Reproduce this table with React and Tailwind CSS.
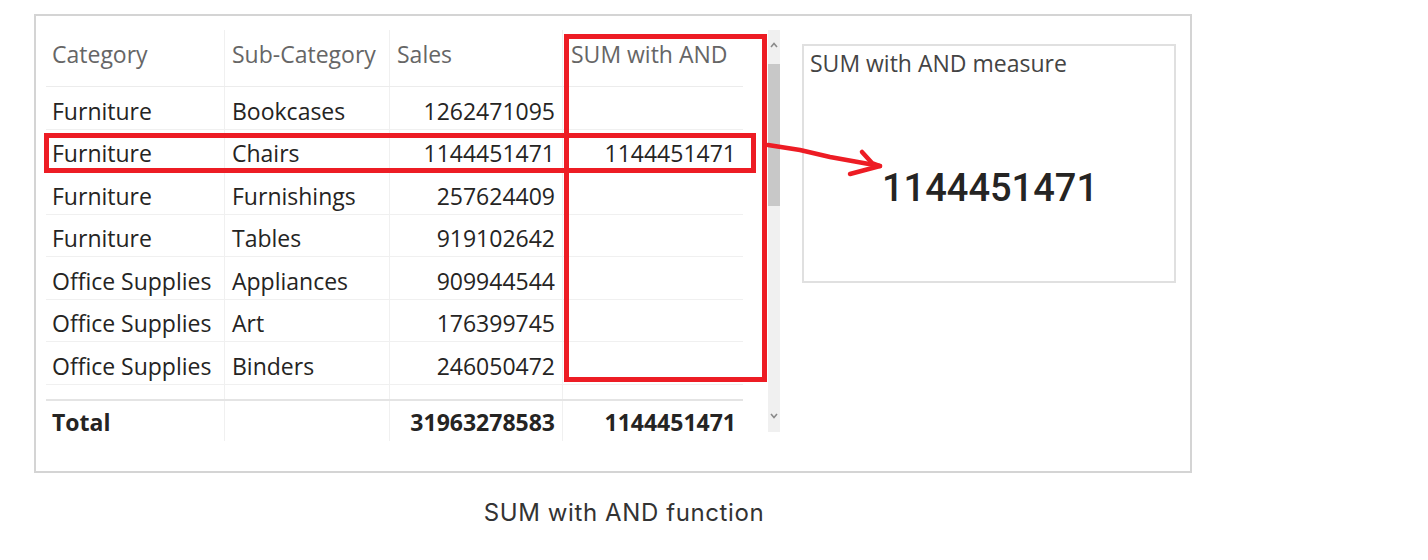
import React from 'react'

const rows = [
  ['Furniture', 'Bookcases', '1262471095', ''],
  ['Furniture', 'Chairs', '1144451471', '1144451471'],
  ['Furniture', 'Furnishings', '257624409', ''],
  ['Furniture', 'Tables', '919102642', ''],
  ['Office Supplies', 'Appliances', '909944544', ''],
  ['Office Supplies', 'Art', '176399745', ''],
  ['Office Supplies', 'Binders', '246050472', ''],
]

const cols = 'grid grid-cols-[179px_165px_173px_180px]'
const sep = 'border-r border-[#f0f0f0]'

export default function App() {
  return (
    <div className="w-[1428px] h-[560px] bg-white overflow-hidden" style={{ fontFamily: '"Open Sans", sans-serif' }}>
      {/* Report frame */}
      <div className="ml-[34px] mt-[14px] w-[1158px] h-[459px] border-2 border-[#d4d4d4] flex pl-[10px] pt-[14px]">
        {/* Table visual */}
        <div className="relative w-[697px] text-[23px] text-[#252423]">
          {/* Header */}
          <div className={`${cols} h-[57px] border-b border-[#ececec] text-[#666]`}>
            <div className={`${sep} pl-[6px] pt-[7px]`}>Category</div>
            <div className={`${sep} pl-[7px] pt-[7px]`}>Sub-Category</div>
            <div className={`${sep} pl-[7px] pt-[7px]`}>Sales</div>
            <div className="pl-[8px] pt-[7px]">SUM with AND</div>
          </div>
          {/* Rows */}
          {rows.map((r, i) => (
            <div key={i} className={`${cols} h-[42.5px] border-b border-[#f0f0f0] items-center`}>
              <div className={`${sep} h-full flex items-center pl-[6px] pt-[6px]`}>{r[0]}</div>
              <div className={`${sep} h-full flex items-center pl-[7px] pt-[6px]`}>{r[1]}</div>
              <div className={`${sep} h-full flex items-center justify-end pr-[7px] pt-[6px]`}>{r[2]}</div>
              <div className="h-full flex items-center justify-end pr-[7px] pt-[6px]">{r[3]}</div>
            </div>
          ))}
          {/* Partially scrolled row */}
          <div className={`${cols} h-[16px] border-b-2 border-[#e4e4e4]`}>
            <div className={sep}></div>
            <div className={sep}></div>
            <div className={sep}></div>
            <div></div>
          </div>
          {/* Total */}
          <div className={`${cols} h-[40px] font-bold text-[#252423]`}>
            <div className={`${sep} flex items-center pl-[6px] pt-[3px]`}>Total</div>
            <div className={sep}></div>
            <div className={`${sep} flex items-center justify-end pr-[7px] pt-[3px]`}>31963278583</div>
            <div className="flex items-center justify-end pr-[7px] pt-[3px]">1144451471</div>
          </div>

          {/* Red highlight boxes */}
          <div className="absolute left-[518px] top-[4px] w-[203px] h-[348px] border-[5px] border-[#ed1c24]"></div>
          <div className="absolute left-[-2px] top-[103px] w-[712px] h-[40px] border-[5px] border-[#ed1c24]"></div>
        </div>

        {/* Scrollbar */}
        <div className="ml-[25px] w-[12px] h-[402px] bg-[#f0f0f0] flex flex-col items-center">
          <svg width="10" height="34" viewBox="0 0 10 34">
            <path d="M2 17 L5 13.5 L8 17" fill="none" stroke="#8a8a8a" strokeWidth="1.6" />
          </svg>
          <div className="w-[12px] h-[142px] bg-[#c8c8c8]"></div>
          <div className="flex-1"></div>
          <svg width="10" height="30" viewBox="0 0 10 30">
            <path d="M2 12 L5 15.5 L8 12" fill="none" stroke="#8a8a8a" strokeWidth="1.6" />
          </svg>
        </div>

        {/* Card visual */}
        <div className="ml-[22px] mt-[14px] w-[374px] h-[239px] border-2 border-[#e0e0e0] flex flex-col">
          <div className="pl-[6px] text-[23px] text-[#444]">SUM with AND measure</div>
          <div className="flex-1 flex items-start justify-center pt-[88px] pl-[2px]">
            <span className="text-[38px] leading-none font-medium text-[#252423]" style={{ fontFamily: 'Roboto, sans-serif' }}>1144451471</span>
          </div>
        </div>
      </div>

      {/* Caption */}
      <div className="w-[1248px] text-center mt-[22px] text-[24px] tracking-[0.6px] text-[#333]" style={{ fontFamily: 'Inter, sans-serif' }}>
        SUM with AND function
      </div>

      {/* Hand-drawn arrow */}
      <svg className="absolute left-0 top-0 pointer-events-none" width="1428" height="560">
        <path d="M768 145 L800 150 L830 157 L880 166" fill="none" stroke="#ed1c24" strokeWidth="4.5" strokeLinecap="round" strokeLinejoin="round" />
        <path d="M862 152 L872 163 L880 166 L850 174" fill="none" stroke="#ed1c24" strokeWidth="4.5" strokeLinecap="round" strokeLinejoin="round" />
      </svg>
    </div>
  )
}
